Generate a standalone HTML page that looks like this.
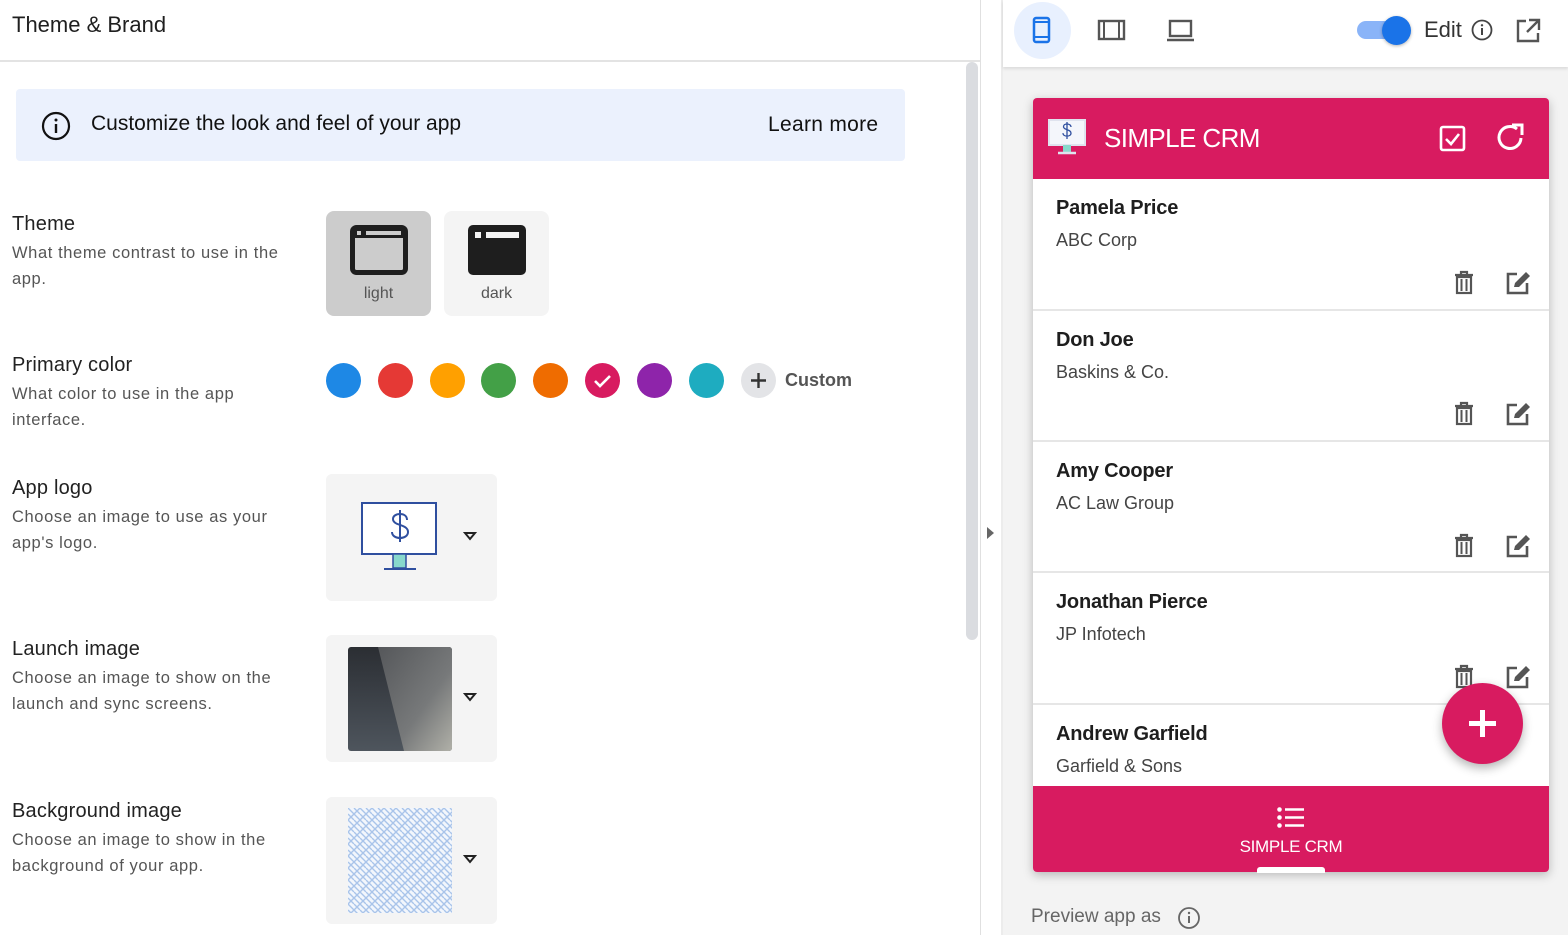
<!DOCTYPE html>
<html><head><meta charset="utf-8"><style>
*{box-sizing:border-box;margin:0;padding:0}
body{width:1568px;height:935px;overflow:hidden;background:#fff;font-family:"Liberation Sans",sans-serif;position:relative;color:#202124}
.a{position:absolute}
.h{font-size:20px;color:#222;font-weight:500;letter-spacing:.2px}
.d{font-size:16.5px;color:#555;line-height:26px;letter-spacing:.6px}
.box{background:#f4f4f4;border-radius:6px}
.dot{position:absolute;top:363px;width:35px;height:35px;border-radius:50%}
.row{position:absolute;left:1033px;width:516px;background:#fff;border-bottom:2px solid #e6e6e6}
.nm{position:absolute;left:23px;top:18px;font-size:20px;font-weight:bold;color:#1e1e1e;letter-spacing:-.2px}
.co{position:absolute;left:23px;top:51px;font-size:18px;color:#444}
</style></head><body>
<!-- left panel -->
<div class="a" style="left:12px;top:12px;font-size:22px;color:#1f1f1f">Theme &amp; Brand</div>
<div class="a" style="left:0;top:60px;width:980px;height:2px;background:#e3e3e3"></div>
<div class="a" style="left:966px;top:62px;width:12px;height:578px;background:#dadce0;border-radius:6px"></div>
<div class="a" style="left:980px;top:0;width:1px;height:935px;background:#e0e0e0"></div>
<div class="a" style="left:1001px;top:0;width:2px;height:935px;background:#ececec"></div>
<svg class="a" style="left:986px;top:526px" width="10" height="14"><path d="M1 1L8 7L1 13Z" fill="#666"/></svg>

<div class="a" style="left:16px;top:89px;width:889px;height:72px;background:#ebf1fd;border-radius:4px"></div>
<svg class="a" style="left:40px;top:110px" width="32" height="32"><circle cx="16" cy="16" r="13" fill="none" stroke="#111" stroke-width="2.2"/><rect x="14.8" y="14" width="2.4" height="9" fill="#111"/><circle cx="16" cy="10" r="1.5" fill="#111"/></svg>
<div class="a" style="left:91px;top:112px;font-size:21px;color:#111">Customize the look and feel of your app</div>
<div class="a" style="left:768px;top:113px;font-size:21px;color:#111;letter-spacing:.3px">Learn more</div>

<div class="a h" style="left:12px;top:213px">Theme</div>
<div class="a d" style="left:12px;top:240px;width:290px">What theme contrast to use in the app.</div>
<div class="a" style="left:326px;top:211px;width:105px;height:105px;background:#cccccc;border-radius:8px"></div>
<svg class="a" style="left:350px;top:225px" width="58" height="50"><rect x="2.5" y="2.5" width="53" height="45" rx="4" fill="none" stroke="#1e1e1e" stroke-width="5"/><rect x="2" y="2" width="54" height="11" fill="#1e1e1e"/><rect x="7" y="6" width="4" height="4" fill="#ccc"/><rect x="16" y="6" width="35" height="4" fill="#ccc"/></svg>
<div class="a" style="left:326px;top:285px;width:105px;text-align:center;font-size:16px;color:#555">light</div>
<div class="a" style="left:444px;top:211px;width:105px;height:105px;background:#f4f4f4;border-radius:8px"></div>
<svg class="a" style="left:468px;top:225px" width="58" height="50"><rect x="0" y="0" width="58" height="50" rx="5" fill="#1e1e1e"/><rect x="7" y="7" width="6" height="6" fill="#f4f4f4"/><rect x="18" y="7" width="33" height="6" fill="#f4f4f4"/></svg>
<div class="a" style="left:444px;top:285px;width:105px;text-align:center;font-size:16px;color:#555">dark</div>

<div class="a h" style="left:12px;top:354px">Primary color</div>
<div class="a d" style="left:12px;top:381px;width:290px">What color to use in the app interface.</div>
<div class="dot" style="left:326px;background:#1e88e5"></div>
<div class="dot" style="left:378px;background:#e53935"></div>
<div class="dot" style="left:430px;background:#ffa000"></div>
<div class="dot" style="left:481px;background:#43a047"></div>
<div class="dot" style="left:533px;background:#ef6c00"></div>
<div class="dot" style="left:585px;background:#d81b60"></div>
<svg class="a" style="left:585px;top:363px" width="35" height="35"><path d="M10 18L15 23L25 13" fill="none" stroke="#fff" stroke-width="2.6"/></svg>
<div class="dot" style="left:637px;background:#8e24aa"></div>
<div class="dot" style="left:689px;background:#1eacc0"></div>
<div class="dot" style="left:741px;background:#e3e4e7"></div>
<svg class="a" style="left:741px;top:363px" width="35" height="35"><path d="M17.5 10V25M10 17.5H25" stroke="#333" stroke-width="2.4"/></svg>
<div class="a" style="left:785px;top:370px;font-size:18px;color:#555;font-weight:bold">Custom</div>

<div class="a h" style="left:12px;top:477px">App logo</div>
<div class="a d" style="left:12px;top:504px;width:290px">Choose an image to use as your app's logo.</div>
<div class="a box" style="left:326px;top:474px;width:171px;height:127px"></div>
<svg class="a" style="left:360px;top:501px" width="80" height="72"><rect x="2" y="2" width="74" height="51" fill="#fff" stroke="#2f4f9f" stroke-width="2"/><path d="M47 19c0-4-3-6-7-6s-7 2-7 5c0 7 15 5 15 13 0 4-4 6-8 6s-8-2-8-6M40 9V41" fill="none" stroke="#2f4f9f" stroke-width="2"/><rect x="33" y="53" width="13" height="14" fill="#88d9cc" stroke="#2f4f9f" stroke-width="1.5"/><path d="M24 68H56" stroke="#2f4f9f" stroke-width="2"/></svg>
<svg class="a" style="left:463px;top:531px" width="14" height="10"><path d="M2 2H12L7 8Z" fill="none" stroke="#222" stroke-width="2"/></svg>

<div class="a h" style="left:12px;top:638px">Launch image</div>
<div class="a d" style="left:12px;top:665px;width:290px">Choose an image to show on the launch and sync screens.</div>
<div class="a box" style="left:326px;top:635px;width:171px;height:127px"></div>
<svg class="a" style="left:348px;top:647px" width="104" height="104"><defs><linearGradient id="g1" x1="0" y1="0" x2="0" y2="1"><stop offset="0" stop-color="#2b2e33"/><stop offset="1" stop-color="#4e555d"/></linearGradient><linearGradient id="g2" x1="0" y1="0" x2="1" y2="1"><stop offset="0" stop-color="#55575a"/><stop offset=".6" stop-color="#77797a"/><stop offset="1" stop-color="#b0b0a8"/></linearGradient></defs><rect width="104" height="104" rx="3" fill="url(#g1)"/><path d="M30 0H101a3 3 0 0 1 3 3V101a3 3 0 0 1-3 3H56Z" fill="url(#g2)"/></svg>
<svg class="a" style="left:463px;top:692px" width="14" height="10"><path d="M2 2H12L7 8Z" fill="none" stroke="#222" stroke-width="2"/></svg>

<div class="a h" style="left:12px;top:800px">Background image</div>
<div class="a d" style="left:12px;top:827px;width:290px">Choose an image to show in the background of your app.</div>
<div class="a box" style="left:326px;top:797px;width:171px;height:127px"></div>
<svg class="a" style="left:348px;top:808px" width="104" height="105"><defs><pattern id="p" width="12" height="12" patternUnits="userSpaceOnUse"><rect width="12" height="12" fill="#f2f6fc"/><path d="M0 0L12 12M6 0L12 6M0 6L6 12M12 0L0 12" stroke="#a9c4ea" stroke-width="1.4"/></pattern></defs><rect width="104" height="105" fill="url(#p)"/></svg>
<svg class="a" style="left:463px;top:854px" width="14" height="10"><path d="M2 2H12L7 8Z" fill="none" stroke="#222" stroke-width="2"/></svg>

<!-- right panel -->
<div class="a" style="left:1003px;top:0;width:565px;height:935px;background:#f3f3f3"></div>
<div class="a" style="left:1003px;top:0;width:565px;height:67px;background:#fff;box-shadow:0 2px 3px rgba(0,0,0,.1)"></div>
<div class="a" style="left:1014px;top:2px;width:57px;height:57px;border-radius:50%;background:#e8f0fe"></div>
<svg class="a" style="left:1031px;top:16px" width="24" height="28"><rect x="3" y="2" width="15" height="24" rx="2" fill="none" stroke="#1a73e8" stroke-width="2.5"/><path d="M3 6H18M3 21H18" stroke="#1a73e8" stroke-width="2"/></svg>
<svg class="a" style="left:1097px;top:19px" width="30" height="22"><rect x="2" y="2" width="25" height="18" fill="none" stroke="#555" stroke-width="2.4"/><path d="M7 2V20M22 2V20" stroke="#555" stroke-width="2"/></svg>
<svg class="a" style="left:1166px;top:19px" width="30" height="24"><rect x="4" y="2" width="21" height="15" fill="none" stroke="#555" stroke-width="2.4"/><path d="M1 21H28" stroke="#555" stroke-width="2.4"/></svg>
<div class="a" style="left:1357px;top:21px;width:36px;height:18px;border-radius:9px;background:#8ab4f8"></div>
<div class="a" style="left:1382px;top:16px;width:29px;height:29px;border-radius:50%;background:#1a73e8;box-shadow:0 1px 3px rgba(0,0,0,.3)"></div>
<div class="a" style="left:1424px;top:17px;font-size:22px;color:#333">Edit</div>
<svg class="a" style="left:1470px;top:18px" width="24" height="24"><circle cx="12" cy="12" r="9.5" fill="none" stroke="#444" stroke-width="1.8"/><rect x="11" y="10" width="2" height="7" fill="#444"/><circle cx="12" cy="7.3" r="1.2" fill="#444"/></svg>
<svg class="a" style="left:1515px;top:18px" width="26" height="26"><path d="M11 3H3V23H23V15" fill="none" stroke="#555" stroke-width="2.4"/><path d="M14 2H24V12M24 2L12 14" fill="none" stroke="#555" stroke-width="2.4"/></svg>

<div class="a" style="left:1033px;top:98px;width:516px;height:774px;box-shadow:0 3px 10px rgba(0,0,0,.25);border-radius:4px;background:#fff"></div>
<div class="a" style="left:1033px;top:98px;width:516px;height:81px;background:#d81b60;border-radius:4px 4px 0 0"></div>
<svg class="a" style="left:1047px;top:118px" width="42" height="40"><rect x="2" y="2" width="36" height="25" fill="#f4f6fb" stroke="#dfe3ee" stroke-width="2"/><path d="M24 9c0-2-2-3-4-3s-3.5 1-3.5 2.6c0 3.8 7.5 2.5 7.5 6.5 0 2-2 3-4 3s-4-1-4-3M20 4V21" fill="none" stroke="#2f4f9f" stroke-width="1.3"/><rect x="16" y="27" width="8" height="7" fill="#88d9cc"/><path d="M11 35H29" stroke="#dfe3ee" stroke-width="2.5"/></svg>
<div class="a" style="left:1104px;top:123px;font-size:26px;color:#fff;letter-spacing:-.6px">SIMPLE CRM</div>
<svg class="a" style="left:1438px;top:124px" width="30" height="30"><rect x="3" y="3" width="23" height="23" rx="2" fill="none" stroke="#fff" stroke-width="2.6"/><path d="M8 15L13 20L21 10" fill="none" stroke="#fff" stroke-width="2.6"/></svg>
<svg class="a" style="left:1494px;top:121px" width="34" height="34"><path d="M27 17A11 11 0 1 1 23 8" fill="none" stroke="#fff" stroke-width="3"/><path d="M18 4H28V14" fill="none" stroke="#fff" stroke-width="3"/></svg>

<div class="row" style="top:179px;height:132px"><div class="nm">Pamela Price</div><div class="co">ABC Corp</div></div>
<div class="row" style="top:311px;height:131px"><div class="nm">Don Joe</div><div class="co">Baskins &amp; Co.</div></div>
<div class="row" style="top:442px;height:131px"><div class="nm">Amy Cooper</div><div class="co">AC Law Group</div></div>
<div class="row" style="top:573px;height:132px"><div class="nm">Jonathan Pierce</div><div class="co">JP Infotech</div></div>
<div class="row" style="top:705px;height:81px;border:0"><div class="nm">Andrew Garfield</div><div class="co">Garfield &amp; Sons</div></div>

<svg width="0" height="0" style="position:absolute"><defs>
<g id="tr"><path d="M3 5H21M9 5V2H15V5" fill="none" stroke="#555" stroke-width="2.2"/><rect x="5" y="7" width="14" height="16" fill="none" stroke="#555" stroke-width="2.2"/><path d="M9.5 9V21M14.5 9V21" stroke="#555" stroke-width="2"/></g>
<g id="ed"><path d="M12 4H3V23H22V13" fill="none" stroke="#555" stroke-width="2.6"/><path d="M9 17L10 13L21 2L25 6L14 17Z" fill="#555"/></g>
</defs></svg>
<svg class="a" style="left:1452px;top:270px" width="26" height="26"><use href="#tr"/></svg><svg class="a" style="left:1505px;top:270px" width="27" height="26"><use href="#ed"/></svg>
<svg class="a" style="left:1452px;top:401px" width="26" height="26"><use href="#tr"/></svg><svg class="a" style="left:1505px;top:401px" width="27" height="26"><use href="#ed"/></svg>
<svg class="a" style="left:1452px;top:533px" width="26" height="26"><use href="#tr"/></svg><svg class="a" style="left:1505px;top:533px" width="27" height="26"><use href="#ed"/></svg>
<svg class="a" style="left:1452px;top:664px" width="26" height="26"><use href="#tr"/></svg><svg class="a" style="left:1505px;top:664px" width="27" height="26"><use href="#ed"/></svg>

<div class="a" style="left:1033px;top:786px;width:516px;height:86px;background:#d81b60;border-radius:0 0 4px 4px"></div>
<svg class="a" style="left:1276px;top:806px" width="30" height="24"><circle cx="3.5" cy="3.5" r="2.3" fill="#fff"/><circle cx="3.5" cy="11.5" r="2.3" fill="#fff"/><circle cx="3.5" cy="19.5" r="2.3" fill="#fff"/><path d="M9 3.5H28M9 11.5H28M9 19.5H28" stroke="#fff" stroke-width="2.4"/></svg>
<div class="a" style="left:1033px;top:837px;width:516px;text-align:center;font-size:17px;color:#fff;letter-spacing:-.3px">SIMPLE CRM</div>
<div class="a" style="left:1257px;top:867px;width:68px;height:6px;background:#fff;border-radius:3px 3px 0 0"></div>

<div class="a" style="left:1442px;top:683px;width:81px;height:81px;border-radius:50%;background:#d81b60;box-shadow:0 4px 10px rgba(0,0,0,.3)"></div>
<svg class="a" style="left:1466px;top:707px" width="33" height="33"><path d="M16.5 3V30M3 16.5H30" stroke="#fff" stroke-width="5"/></svg>

<div class="a" style="left:1031px;top:906px;font-size:19px;color:#666">Preview app as</div>
<svg class="a" style="left:1176px;top:905px" width="26" height="26"><circle cx="13" cy="13" r="10" fill="none" stroke="#666" stroke-width="1.8"/><rect x="12" y="11" width="2" height="7" fill="#666"/><circle cx="13" cy="8" r="1.2" fill="#666"/></svg>
</body></html>
